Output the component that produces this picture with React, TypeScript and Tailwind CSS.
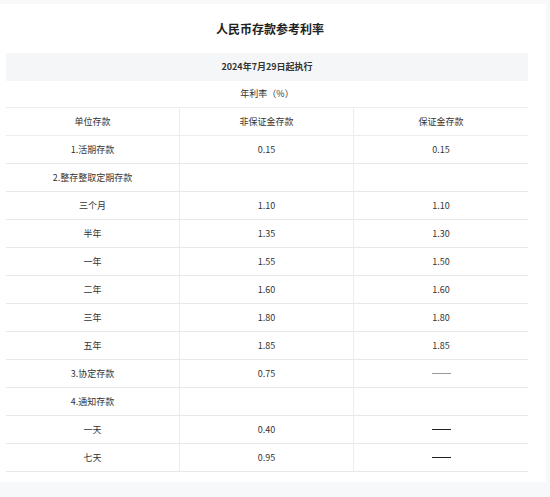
const rows: { name: string; a: string; b: string; dash?: "light" | "dark" }[] = [
  { name: "1.活期存款", a: "0.15", b: "0.15" },
  { name: "2.整存整取定期存款", a: "", b: "" },
  { name: "三个月", a: "1.10", b: "1.10" },
  { name: "半年", a: "1.35", b: "1.30" },
  { name: "一年", a: "1.55", b: "1.50" },
  { name: "二年", a: "1.60", b: "1.60" },
  { name: "三年", a: "1.80", b: "1.80" },
  { name: "五年", a: "1.85", b: "1.85" },
  { name: "3.协定存款", a: "0.75", b: "", dash: "light" },
  { name: "4.通知存款", a: "", b: "" },
  { name: "一天", a: "0.40", b: "", dash: "dark" },
  { name: "七天", a: "0.95", b: "", dash: "dark" },
];

function Cell({ children, last }: { children?: React.ReactNode; last?: boolean }) {
  return (
    <div
      className={`flex items-center justify-center ${
        last ? "" : "border-r border-[#ededed]"
      }`}
    >
      {children}
    </div>
  );
}

export default function App() {
  return (
    <div
      className="min-h-[497px] bg-[#f7f8fa] pt-[4px] text-[#333]"
      style={{ fontFamily: '"Noto Sans CJK SC", "Noto Sans", sans-serif' }}
    >
      <div className="w-[546px] bg-white pl-[6px] pr-[18px] pb-[10px]">
        <div className="h-[49px] flex items-center justify-center pl-[6px]">
          <h1 className="text-[12px] font-bold text-[#222]">人民币存款参考利率</h1>
        </div>
        <div className="text-[9px]">
          <div className="h-[28px] bg-[#f5f6f8] flex items-center justify-center font-bold">
            2024年7月29日起执行
          </div>
          <div className="h-[27px] border-b border-[#ededed] flex items-center justify-center">
            年利率（%）
          </div>
          <div className="grid grid-cols-3 h-[28px] border-b border-[#ededed]">
            <Cell>单位存款</Cell>
            <Cell>非保证金存款</Cell>
            <Cell last>保证金存款</Cell>
          </div>
          {rows.map((r) => (
            <div
              key={r.name}
              className="grid grid-cols-3 h-[28px] border-b border-[#e8e8e8]"
            >
              <Cell>{r.name}</Cell>
              <Cell>{r.a}</Cell>
              <Cell last>
                {r.dash === "light" && (
                  <span className="block w-[19px] h-px bg-[#999]" />
                )}
                {r.dash === "dark" && (
                  <span className="block w-[19px] h-[1.5px] bg-[#222]" />
                )}
                {!r.dash && r.b}
              </Cell>
            </div>
          ))}
        </div>
      </div>
    </div>
  );
}
